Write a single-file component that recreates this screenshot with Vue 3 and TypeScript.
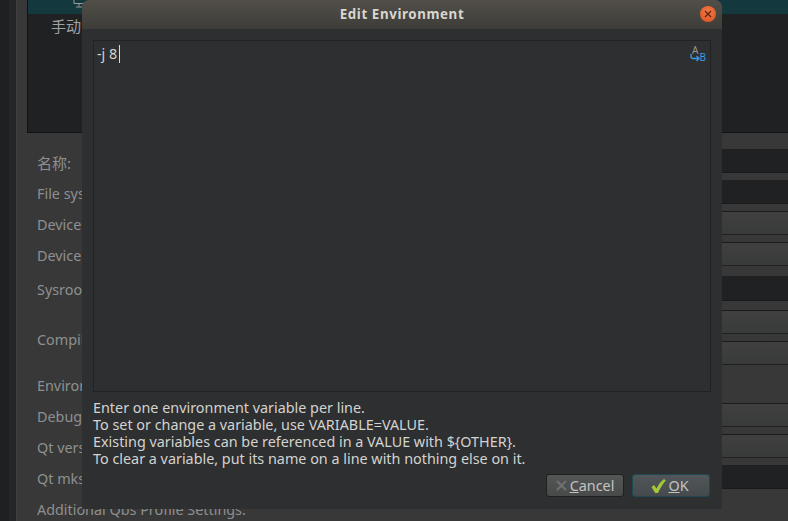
<script setup lang="ts">
interface Row { label: string; kind: 'dark' | 'btn' | 'none'; h: number; gap: number; cls?: string }
const rows: Row[] = [
  { label: '名称:', kind: 'dark', h: 24, gap: 16, cls: 'cjk' },
  { label: 'File sys', kind: 'dark', h: 24, gap: 7 },
  { label: 'Device', kind: 'btn', h: 24, gap: 7 },
  { label: 'Device', kind: 'btn', h: 24, gap: 7 },
  { label: 'Sysroo', kind: 'dark', h: 25, gap: 10 },
  { label: 'Compil', kind: 'btn', h: 55, gap: 9, cls: 'low' },
  { label: 'Enviror', kind: 'none', h: 24, gap: 8, cls: 'flat' },
  { label: 'Debug', kind: 'btn', h: 24, gap: 6 },
  { label: 'Qt vers', kind: 'btn', h: 24, gap: 7 },
  { label: 'Qt mks', kind: 'dark', h: 24, gap: 7 },
  { label: 'Additional Qbs Profile Settings:', kind: 'none', h: 24, gap: 8, cls: 'wide flat' }
]
const hints: string[] = [
  'Enter one environment variable per line.',
  'To set or change a variable, use VARIABLE=VALUE.',
  'Existing variables can be referenced in a VALUE with ${OTHER}.',
  'To clear a variable, put its name on a line with nothing else on it.'
]
</script>

<template>
  <div class="screen">
    <div class="strip-a"></div>
    <div class="strip-b"></div>
    <main class="page">
      <section class="list">
        <div class="selected">
          <svg class="monitor" width="12" height="8" viewBox="0 0 12 8">
            <path d="M1 0v3.500h10M6 3.500v3M3 7h6" fill="none" stroke="#9a9c9c" stroke-width="1" />
          </svg>
        </div>
        <div class="manual">手动</div>
      </section>
      <section class="form">
        <div
          v-for="(r, i) in rows"
          :key="i"
          class="row"
          :style="{ height: r.h + 'px', marginTop: r.gap + 'px' }"
        >
          <span class="label" :class="r.cls">{{ r.label }}</span>
          <div v-if="r.kind === 'dark'" class="field"></div>
          <div v-else-if="r.kind === 'btn' && r.h > 30" class="stack">
            <div class="combo"></div>
            <div class="combo"></div>
          </div>
          <div v-else-if="r.kind === 'btn'" class="combo"></div>
        </div>
      </section>
    </main>

    <div class="dialog">
      <header class="titlebar">
        <span class="title">Edit Environment</span>
        <button class="close" aria-label="Close">
          <svg width="8" height="8" viewBox="0 0 8 8">
            <path d="M1 1l6 6M7 1L1 7" stroke="#5a2410" stroke-width="1.300" />
          </svg>
        </button>
      </header>
      <div class="body">
        <div class="editor">
          <span class="typed">-j 8</span><span class="caret"></span>
          <div class="ab">
            <span class="ab-a">A</span>
            <svg class="ab-arrow" width="10" height="8" viewBox="0 0 10 8">
              <path d="M1 0v2.500q0 2 2 2h6M6.500 2l2.500 2.500L6.500 7" fill="none" stroke="#3d9ae0" stroke-width="1.300" />
            </svg>
            <span class="ab-b">B</span>
          </div>
        </div>
        <div class="hints">
          <div v-for="h in hints" :key="h">{{ h }}</div>
        </div>
        <div class="actions">
          <button class="btn">
            <svg width="11" height="11" viewBox="0 0 11 11">
              <path d="M1 1l9 9M10 1L1 10" stroke="#6f7172" stroke-width="2" />
            </svg>
            <span><u>C</u>ancel</span>
          </button>
          <button class="btn ok">
            <svg width="15" height="16" viewBox="0 0 15 15">
              <path d="M.5 8.500l2.500-2 2.500 3.500C7.500 6 10 2.800 13 .5L14.800 2C11.800 5.500 8.800 10 7 14.500H4.200z" fill="#a4c639" />
            </svg>
            <span><u>O</u>K</span>
          </button>
        </div>
      </div>
    </div>
  </div>
</template>

<style scoped>
.screen {
  position: relative;
  display: flex;
  width: 788px;
  height: 521px;
  overflow: hidden;
  background: #383838;
  font-family: "Noto Sans", "Noto Sans CJK SC", sans-serif;
  font-size: 14.36px;
  color: #8e9090;
}
.strip-a {
  width: 9px;
  background: #1f2021;
}
.strip-b {
  width: 8px;
  background: #252627;
  border-right: 1px solid #3f3f3f;
  box-sizing: border-box;
}
.page {
  flex: 1;
  display: flex;
  flex-direction: column;
  padding-left: 10px;
}
.list {
  height: 134px;
  background: #202122;
  border-left: 1px solid #101112;
  border-bottom: 1px solid #101112;
  box-sizing: border-box;
}
.selected {
  position: relative;
  height: 14px;
  background: #13393f;
}
.monitor {
  position: absolute;
  left: 45px;
  top: 0;
}
.manual {
  margin: 3px 0 0 23px;
  font-size: 15px;
  line-height: 18px;
  color: #a0a2a2;
}
.form {
  padding-left: 10px;
}
.row {
  display: flex;
  align-items: center;
}
.label {
  width: 45px;
  flex: none;
  padding-top: 2px;
  overflow: hidden;
  white-space: nowrap;
  color: #8e9090;
}
.label.cjk {
  font-size: 15px;
}
.label.low {
  padding-top: 3px;
}
.label.flat {
  padding-top: 0;
}
.label.wide {
  width: 300px;
}
.field {
  flex: 1;
  align-self: stretch;
  background: #202122;
  border-bottom: 1px solid #191a1b;
}
.combo {
  flex: 1;
  height: 24px;
  box-sizing: border-box;
  background: linear-gradient(#3f403f, #393a3a);
  border-top: 1px solid #1a1b1b;
  border-bottom: 1px solid #1f2020;
}
.stack {
  flex: 1;
  align-self: stretch;
  display: flex;
  flex-direction: column;
  justify-content: space-between;
}
.stack .combo {
  flex: none;
}
.dialog {
  position: absolute;
  left: 82px;
  top: 0;
  width: 640px;
  height: 509px;
  display: flex;
  flex-direction: column;
  background: #2e2f31;
  border-radius: 7px 7px 0 0;
  color: #d3d3d0;
}
.titlebar {
  position: relative;
  height: 29px;
  flex: none;
  display: flex;
  align-items: center;
  justify-content: center;
  background: linear-gradient(#524f49, #3d3c38);
  border-radius: 7px 7px 0 0;
}
.title {
  padding-bottom: 2px;
  font-weight: 700;
  font-size: 13.33px;
  letter-spacing: 0.6px;
  color: #d8d6d0;
}
.close {
  position: absolute;
  right: 6px;
  top: 6px;
  width: 16px;
  height: 16px;
  padding: 0;
  border: none;
  border-radius: 50%;
  background: radial-gradient(circle at 50% 35%, #f07a45, #dd4f1f);
  display: flex;
  align-items: center;
  justify-content: center;
}
.body {
  flex: 1;
  display: flex;
  flex-direction: column;
  padding: 11px 11px 12px;
  min-height: 0;
}
.editor {
  position: relative;
  height: 352px;
  flex: none;
  box-sizing: border-box;
  border: 1px solid #212223;
  padding: 3px 3px;
  display: flex;
  align-items: flex-start;
  color: #d3d3d0;
  line-height: 20px;
}
.caret {
  width: 1px;
  height: 18px;
  margin: 1px 0 0 2px;
  background: #d8d8d8;
}
.ab {
  position: absolute;
  right: 4px;
  top: 5px;
  width: 16px;
  height: 16px;
  font-size: 10px;
  line-height: 9px;
}
.ab-a {
  position: absolute;
  left: 2px;
  top: 0;
  color: #96989a;
}
.ab-b {
  position: absolute;
  left: 9.500px;
  top: 7px;
  color: #3d9ae0;
}
.ab-arrow {
  position: absolute;
  left: 0;
  top: 8px;
}
.hints {
  margin-top: 7px;
  line-height: 17px;
  white-space: nowrap;
  color: #d3d3d0;
}
.actions {
  margin-top: auto;
  display: flex;
  justify-content: flex-end;
  gap: 8px;
  padding-right: 1px;
}
.btn {
  width: 78px;
  height: 23px;
  padding: 0;
  box-sizing: border-box;
  display: flex;
  align-items: center;
  justify-content: center;
  gap: 3px;
  font: inherit;
  color: #c2c3c2;
  background: linear-gradient(#545656, #484a4a);
  border: 1px solid #1f2020;
  border-radius: 3px;
}
.ok {
  gap: 2px;
  padding-right: 2px;
  border-color: #1d4a52;
  background: linear-gradient(#505659, #454a4d);
}
</style>
